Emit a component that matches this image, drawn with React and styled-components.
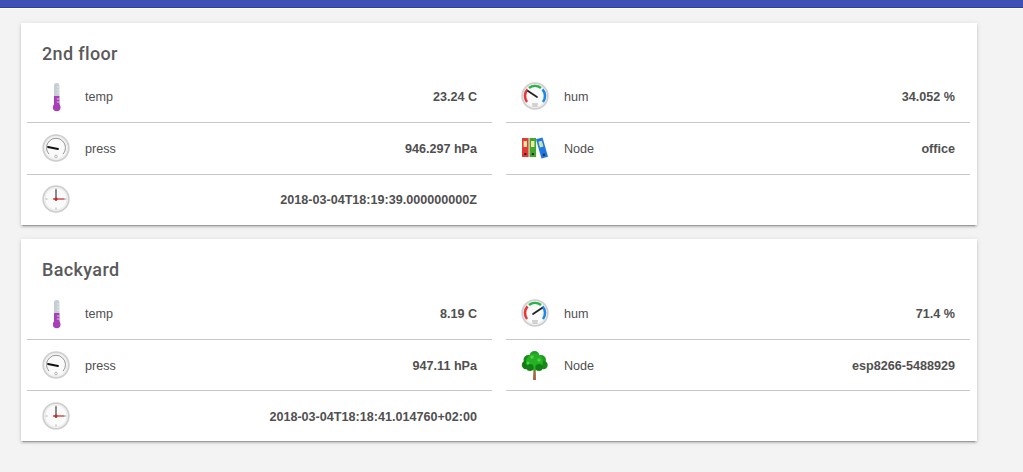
import React from 'react';
import styled, { createGlobalStyle } from 'styled-components';

const GlobalStyle = createGlobalStyle`
  html, body {
    margin: 0;
    padding: 0;
    height: 100%;
    background: #f3f3f3;
    font-family: Roboto, "Liberation Sans", sans-serif;
  }
`;

const TopBar = styled.header`
  height: 7px;
  background: #3f51b5;
  border-bottom: 1px solid #303f9f;
  box-shadow: 0 1px 0 #fff;
`;

const Page = styled.main`
  display: flex;
  flex-direction: column;
  gap: 14.8px;
  width: 956px;
  margin-left: 21px;
  padding-top: 14.6px;
`;

const Card = styled.section`
  height: 202px;
  background: #fff;
  box-shadow: 0 2px 2px 0 rgba(0, 0, 0, 0.14), 0 1px 5px 0 rgba(0, 0, 0, 0.12),
    0 3px 1px -2px rgba(0, 0, 0, 0.2);
`;

const Title = styled.h2`
  margin: 0;
  height: 49px;
  padding: 0 0 0 21px;
  font-size: 18px;
  font-weight: 500;
  letter-spacing: 0.36px;
  line-height: 62.5px;
  color: #5a5a5a;
`;

const Grid = styled.div`
  display: grid;
  grid-template-columns: 465px 464px;
  column-gap: 14px;
  padding-left: 6px;
`;

const Row = styled.div`
  display: flex;
  align-items: center;
  height: 51.5px;
  box-sizing: border-box;
  padding: ${(p) => (p.$last ? '0' : '1px')} 15px 0 13px;
  font-family: "Liberation Sans", Arial, sans-serif;
  font-size: 12.6px;
  color: #505050;
  border-bottom: ${(p) => (p.$last ? 'none' : '1px solid #c8c8c8')};
`;

const IconBox = styled.span`
  display: flex;
  justify-content: center;
  align-items: center;
  width: 32px;
  height: 32px;
  margin-right: 13px;
  flex: none;
`;

const Label = styled.span`
  flex: 1;
  white-space: nowrap;
`;

const Value = styled.span`
  font-weight: 700;
  white-space: nowrap;
`;

const Thermometer = () => (
  <svg width="32" height="32" viewBox="0 0 32 32">
    <rect x="14" y="2" width="5.4" height="25" rx="2.4" fill="#c5cfd3" />
    <rect x="14" y="15" width="5.4" height="12" fill="#a63fb8" />
    <circle cx="16.7" cy="26.4" r="3.8" fill="#a63fb8" />
    <path d="M16.8 6h2.6M16.8 9h2.6M16.8 12h2.6M16.8 18h2.6M16.8 21h2.6" stroke="#eee" strokeWidth="0.8" />
  </svg>
);

const Dial = ({ children }) => (
  <svg width="32" height="32" viewBox="0 0 32 32">
    <circle cx="16" cy="15" r="12.8" fill="#fafafa" stroke="#cfcfcf" strokeWidth="1.8" />
    <circle cx="16" cy="15" r="11.2" fill="none" stroke="#e6e6e6" strokeWidth="0.8" />
    {children}
  </svg>
);

const PressGauge = () => (
  <Dial>
    <path d="M9 21.2A9.5 9.5 0 1 1 23 21.2" fill="none" stroke="#8a8a8a" strokeWidth="0.9" />
    <path d="M8 14L18 16" stroke="#111" strokeWidth="1.8" strokeLinecap="round" />
    <circle cx="16" cy="23.5" r="1.3" fill="none" stroke="#999" strokeWidth="0.7" />
  </Dial>
);

const Clock = () => (
  <Dial>
    <path d="M16 4.5v2M16 23.5v2M5.5 15h2M24.5 15h2" stroke="#999" strokeWidth="0.8" />
    <path d="M16 17V5.5" stroke="#444" strokeWidth="1.2" />
    <path d="M13 15h11.5" stroke="#c62828" strokeWidth="1.2" />
    <circle cx="16" cy="15" r="1.6" fill="#c62828" />
  </Dial>
);

const HumGauge = ({ needle }) => (
  <Dial>
    <path d="M8 21A10 10 0 0 1 8.5 8.4" fill="none" stroke="#e53935" strokeWidth="2.6" />
    <path d="M10 7A10 10 0 0 1 22 7" fill="none" stroke="#2eb34a" strokeWidth="2.6" />
    <path d="M23.5 8.4A10 10 0 0 1 24 21" fill="none" stroke="#1e88e5" strokeWidth="2.6" />
    <path d={needle} stroke="#222" strokeWidth="1.7" strokeLinecap="round" />
    <path d="M13 23h6M13.5 25h5" stroke="#aaa" strokeWidth="1" />
  </Dial>
);

const Binders = () => (
  <svg width="32" height="32" viewBox="0 0 32 32">
    <rect x="3" y="5" width="6.6" height="19" fill="#e53935" />
    <rect x="4.6" y="8" width="3.4" height="6" fill="#f5e9a0" />
    <rect x="5.3" y="20" width="2" height="2" fill="#222" />
    <rect x="10.5" y="5" width="6.6" height="19" fill="#43a82f" />
    <rect x="12" y="8" width="3.4" height="6" fill="#f5e9a0" />
    <rect x="12.8" y="20" width="2" height="2" fill="#222" />
    <g transform="rotate(-16 23 15)">
      <rect x="19.6" y="5" width="6.8" height="20" fill="#1e78e6" />
      <rect x="21.2" y="8" width="3.6" height="6" fill="#c8e6a0" />
      <rect x="22" y="21" width="2" height="2" fill="#222" />
    </g>
  </svg>
);

const Tree = () => (
  <svg width="32" height="32" viewBox="0 0 32 32">
    <path d="M14.6 16h2l.4 14h-3z" fill="#9a6a3c" />
    <circle cx="15.5" cy="6" r="5" fill="#1ea01e" />
    <circle cx="9.5" cy="10" r="5" fill="#158a15" />
    <circle cx="22" cy="10" r="5" fill="#1ea01e" />
    <circle cx="7" cy="15" r="4.2" fill="#0f7d12" />
    <circle cx="24.5" cy="15" r="4.2" fill="#158a15" />
    <circle cx="15.5" cy="12" r="8.5" fill="#25b025" />
    <circle cx="11" cy="17.5" r="3.6" fill="#127f14" />
    <circle cx="20" cy="17.5" r="3.6" fill="#127f14" />
    <circle cx="13" cy="7" r="1.8" fill="#50cf40" />
    <circle cx="20" cy="10" r="1.8" fill="#50cf40" />
    <circle cx="9" cy="13" r="1.5" fill="#50cf40" />
  </svg>
);

const needleLow = 'M9 10L18 16';
const needleHigh = 'M23 10L14 16';

const sensors = [
  {
    name: '2nd floor',
    rows: [
      { icon: <Thermometer />, label: 'temp', value: '23.24 C' },
      { icon: <HumGauge needle={needleLow} />, label: 'hum', value: '34.052 %' },
      { icon: <PressGauge />, label: 'press', value: '946.297 hPa' },
      { icon: <Binders />, label: 'Node', value: 'office' },
      { icon: <Clock />, label: '', value: '2018-03-04T18:19:39.000000000Z', last: true },
    ],
  },
  {
    name: 'Backyard',
    rows: [
      { icon: <Thermometer />, label: 'temp', value: '8.19 C' },
      { icon: <HumGauge needle={needleHigh} />, label: 'hum', value: '71.4 %' },
      { icon: <PressGauge />, label: 'press', value: '947.11 hPa' },
      { icon: <Tree />, label: 'Node', value: 'esp8266-5488929' },
      { icon: <Clock />, label: '', value: '2018-03-04T18:18:41.014760+02:00', last: true },
    ],
  },
];

export default function App() {
  return (
    <>
      <GlobalStyle />
      <TopBar />
      <Page>
        {sensors.map((sensor) => (
          <Card key={sensor.name}>
            <Title>{sensor.name}</Title>
            <Grid>
              {sensor.rows.map((row) => (
                <Row key={row.value} $last={row.last}>
                  <IconBox>{row.icon}</IconBox>
                  <Label>{row.label}</Label>
                  <Value>{row.value}</Value>
                </Row>
              ))}
            </Grid>
          </Card>
        ))}
      </Page>
    </>
  );
}
